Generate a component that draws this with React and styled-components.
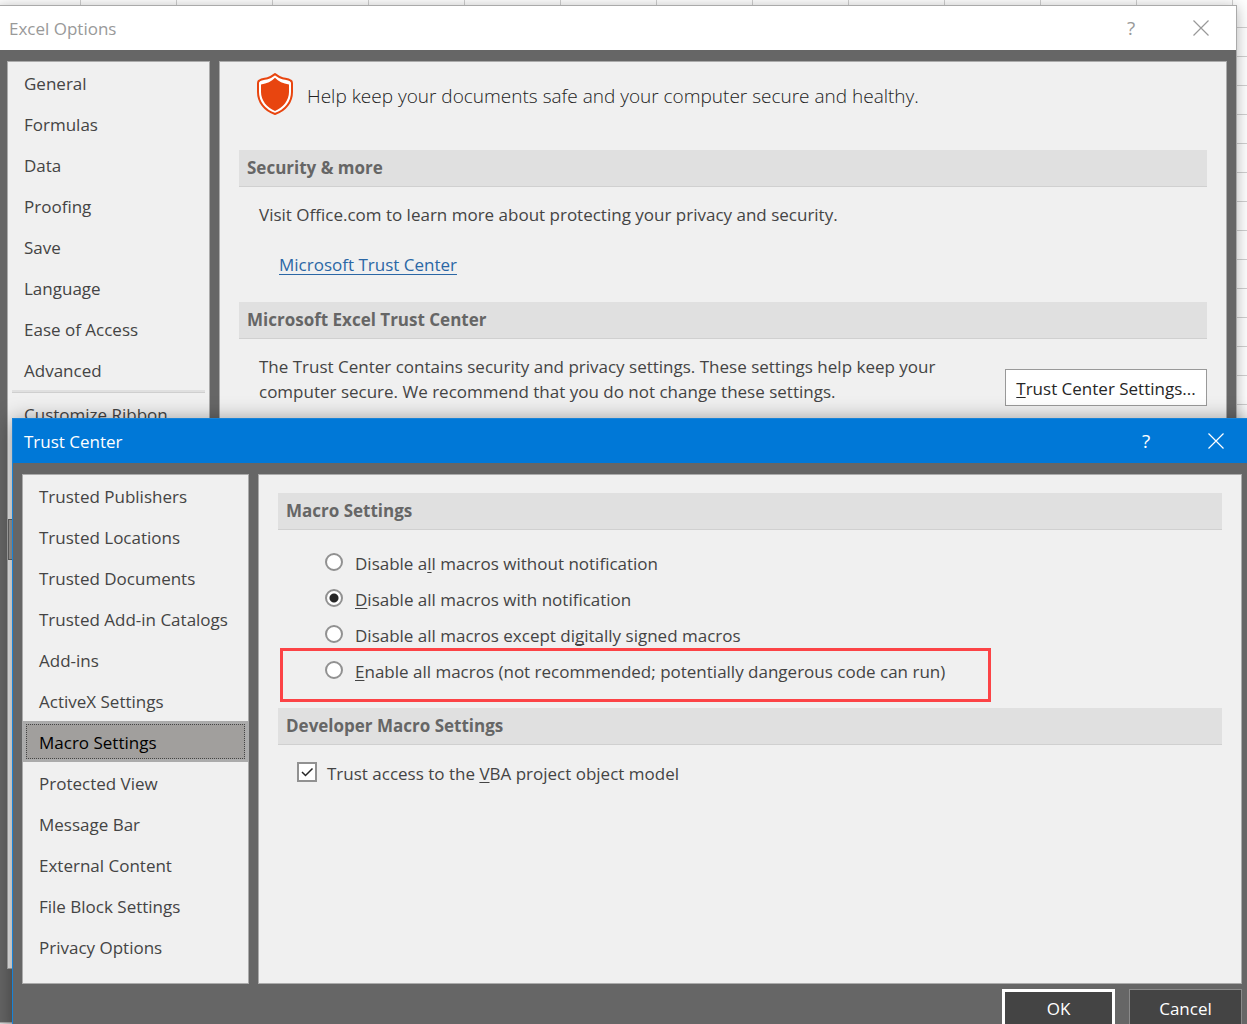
import React, { useState } from 'react';
import styled, { createGlobalStyle } from 'styled-components';

const GlobalStyle = createGlobalStyle`
  *, *::before, *::after { box-sizing: border-box; }
  body {
    margin: 0;
    font-family: "Open Sans", "Noto Sans", sans-serif;
    font-size: 17px;
    line-height: 25px;
    color: #444;
  }
  button, input { font: inherit; margin: 0; }
`;

const Desktop = styled.div`
  position: relative;
  height: 100vh;
  overflow: hidden;
  background-color: #fff;
  background-image:
    repeating-linear-gradient(to bottom, transparent 0 28px, #d0d0d0 28px 29px),
    repeating-linear-gradient(to right, transparent 0 95px, #d0d0d0 95px 96px);
  background-position: 0 -1px, -15px 0;
  background-size: 100% 2900px, 2880px 100%;
`;

const Dialog = styled.section`
  position: absolute;
  display: flex;
  flex-direction: column;
  background: #666;
  border: 1px solid ${(p) => (p.$active ? '#1883d7' : '#aaa')};
`;

const OptionsDialog = styled(Dialog)`
  inset: 5px 10px 1px -3px;
  box-shadow: 0 2px 14px rgba(0, 0, 0, 0.3);
`;

const TrustDialog = styled(Dialog)`
  inset: 418px -5px -14px 12px;
  box-shadow: 0 2px 20px rgba(0, 0, 0, 0.4);
`;

const TitleBar = styled.header`
  display: flex;
  flex: none;
  align-items: center;
  height: 44px;
  padding-left: 11px;
  background: ${(p) => (p.$active ? '#0078d7' : '#fff')};
  color: ${(p) => (p.$active ? '#fff' : '#999')};
`;

const Title = styled.h1`
  flex: 1;
  margin: 0;
  font-size: 17px;
  font-weight: 400;
`;

const CaptionButton = styled.button`
  display: flex;
  align-items: center;
  justify-content: center;
  width: 70px;
  height: 44px;
  padding: 0;
  border: 0;
  background: none;
  color: inherit;
  font-size: 19px;
`;

const Panes = styled.div`
  display: flex;
  flex: 1;
  gap: 9px;
  min-height: 0;
  padding: 11px 9px 0;
`;

const Sidebar = styled.nav`
  flex: none;
  width: ${(p) => p.$width};
  border: 1px solid #ababab;
  background: #f0f0f0;
`;

const NavItem = styled.button`
  display: block;
  width: 100%;
  height: 41px;
  padding: 2px 16px 0;
  border: 0;
  background: ${(p) => (p.$selected ? '#a19f9d' : 'none')};
  box-shadow: ${(p) => (p.$selected ? 'inset 0 0 0 3px #ababab' : 'none')};
  outline: ${(p) => (p.$selected ? '1px dotted #444' : 'none')};
  outline-offset: -4px;
  color: ${(p) => (p.$selected ? '#000' : '#444')};
  text-align: left;
  white-space: nowrap;
`;

const CoveredItem = styled(NavItem)`
  background: #a19f9d;
  box-shadow: none;
  outline: 1px solid #666;
  outline-offset: -1px;
`;

const NavRule = styled.hr`
  height: 3px;
  margin: 0 4px;
  border: 0;
  border-bottom: 1px solid #cfcfcf;
  background: #e0e0e0;
`;

const Pane = styled.main`
  flex: 1;
  min-width: 0;
  padding: 0 19px;
  border: 1px solid #ababab;
  background: #f0f0f0;
`;

const TrustPane = styled(Pane)`
  padding-top: 18px;
`;

const Intro = styled.div`
  display: flex;
  align-items: center;
  gap: 14px;
  height: 88px;
  padding: 0 0 24px 18px;
  color: #222;
  font-size: 19px;
  font-weight: 300;
`;

const SectionTitle = styled.h2`
  height: 37px;
  margin: 0;
  padding: 5px 8px;
  border-bottom: 1px solid #d0d0d0;
  background: #e0e0e0;
  color: #666;
  font-size: 17px;
  font-weight: 700;
`;

const SectionBody = styled.div`
  display: flex;
  flex-direction: column;
  align-items: flex-start;
  gap: 25px;
  padding: 15px 0 25px 20px;
`;

const SettingsRow = styled.div`
  display: flex;
  align-items: flex-start;
  justify-content: space-between;
  padding: 15px 0 0 20px;
`;

const Text = styled.p`
  margin: 0;
`;

const IntroText = styled(Text)`
  padding-top: 4px;
`;

const WrappedText = styled(Text)`
  flex: 1;
  max-width: 700px;
`;

const TrustLink = styled.a`
  margin-left: 20px;
  color: #2b67a5;
  text-decoration: underline;
  text-decoration-thickness: 1px;
  text-underline-offset: 3px;
`;

const SettingsButton = styled.button`
  flex: none;
  width: 202px;
  height: 37px;
  margin-top: 15px;
  padding: 2px 0 0;
  border: 1px solid #999;
  background: #fff;
  color: #262626;
  white-space: nowrap;
`;

const Key = styled.span`
  text-decoration: underline;
  text-decoration-thickness: 1px;
  text-underline-offset: 2px;
  text-decoration-skip-ink: none;
`;

const OptionGroup = styled.div`
  position: relative;
  padding: 14px 0 20px 47px;
`;

const OptionLabel = styled.label`
  display: flex;
  align-items: center;
  gap: 12px;
  height: 36px;
`;

const LabelText = styled.span`
  padding-top: 2px;
`;

const Radio = styled.input`
  flex: none;
  appearance: none;
  width: 18px;
  height: 18px;
  border: 2px solid #919191;
  border-radius: 50%;
  background: #fff;
  &:checked {
    background: radial-gradient(circle, #262626 0 4px, #fff 5px);
  }
`;

const Highlight = styled.div`
  position: absolute;
  left: 2px;
  top: 118px;
  width: 711px;
  height: 54px;
  border: 3px solid #fc4346;
  pointer-events: none;
`;

const CheckRow = styled.label`
  display: flex;
  align-items: center;
  gap: 10px;
  height: 36px;
  margin-top: 9px;
  padding-left: 19px;
`;

const CheckBox = styled.span`
  display: grid;
  flex: none;
  > * { grid-area: 1 / 1; }
  svg { pointer-events: none; }
`;

const Check = styled.input`
  appearance: none;
  width: 20px;
  height: 20px;
  border: 2px solid #919191;
  background: #fff;
  &:not(:checked) + svg { visibility: hidden; }
`;

const Footer = styled.footer`
  display: flex;
  flex: none;
  justify-content: flex-end;
  gap: 14px;
  height: 53px;
  padding: 5px 9px;
`;

const FooterButton = styled.button`
  width: 113px;
  height: 38px;
  padding: 0;
  border: ${(p) => (p.$primary ? '3px solid #fff' : '1px solid #8a8a8a')};
  background: #444;
  color: #fff;
`;

const CloseIcon = () => (
  <svg width="16" height="16" viewBox="0 0 16 16" fill="none" stroke="currentColor" strokeWidth="1.200" aria-hidden="true">
    <path d="M.5.5l15 15M15.5.5l-15 15" />
  </svg>
);

const ShieldIcon = () => (
  <svg width="36" height="42" viewBox="0 0 36 42" aria-hidden="true">
    <path
      d="M18 1c2 1.500 4 3.300 7.500 4.200 3 .800 6 .900 8 2.300 1 .500 1.500 1 1.500 2.500v9c0 10-6.500 18.500-17 22C7.500 37.500 1 29 1 19v-9c0-1.500.500-2 1.500-2.500 2-1.400 5-1.500 8-2.300C14 4.300 16 2.500 18 1z"
      fill="#fff"
      stroke="#e8450f"
      strokeWidth="2"
      strokeLinejoin="round"
    />
    <path
      d="M18 4.800c3.500 3.700 8 5.800 14 6.700V19c0 8.500-6 15.500-14 19C10 34.500 4 27.500 4 19v-7.500c6-.900 10.500-3 14-6.700z"
      fill="#e8450f"
    />
  </svg>
);

const WindowTitle = ({ title, active }) => (
  <TitleBar $active={active}>
    <Title>{title}</Title>
    <CaptionButton type="button" aria-label="Help">?</CaptionButton>
    <CaptionButton type="button" aria-label="Close"><CloseIcon /></CaptionButton>
  </TitleBar>
);

const optionGroups = [
  ['General', 'Formulas', 'Data', 'Proofing', 'Save', 'Language', 'Ease of Access', 'Advanced'],
  ['Customize Ribbon', ''],
  [''],
];

const trustItems = [
  'Trusted Publishers', 'Trusted Locations', 'Trusted Documents', 'Trusted Add-in Catalogs',
  'Add-ins', 'ActiveX Settings', 'Macro Settings', 'Protected View', 'Message Bar',
  'External Content', 'File Block Settings', 'Privacy Options',
];

const macroOptions = [
  ['Disable a', 'l', 'l macros without notification'],
  ['', 'D', 'isable all macros with notification'],
  ['Disable all macros except di', 'g', 'itally signed macros'],
  ['', 'E', 'nable all macros (not recommended; potentially dangerous code can run)'],
];

export default function App() {
  const [page, setPage] = useState('Macro Settings');
  const [macro, setMacro] = useState(1);
  const [vba, setVba] = useState(true);

  return (
    <>
      <GlobalStyle />
      <Desktop>
        <OptionsDialog aria-label="Excel Options">
          <WindowTitle title="Excel Options" />
          <Panes>
            <Sidebar $width="203px">
              {optionGroups.map((group, g) => (
                <React.Fragment key={g}>
                  {g > 0 && <NavRule />}
                  {group.map((name, i) => (
                    <NavItem type="button" key={i}>{name}</NavItem>
                  ))}
                </React.Fragment>
              ))}
              <CoveredItem type="button" />
            </Sidebar>
            <Pane>
              <Intro>
                <ShieldIcon />
                <IntroText>Help keep your documents safe and your computer secure and healthy.</IntroText>
              </Intro>
              <SectionTitle>Security &amp; more</SectionTitle>
              <SectionBody>
                <Text>Visit Office.com to learn more about protecting your privacy and security.</Text>
                <TrustLink href="#trust-center">Microsoft Trust Center</TrustLink>
              </SectionBody>
              <SectionTitle>Microsoft Excel Trust Center</SectionTitle>
              <SettingsRow>
                <WrappedText>
                  The Trust Center contains security and privacy settings. These settings help keep your
                  computer secure. We recommend that you do not change these settings.
                </WrappedText>
                <SettingsButton type="button"><Key>T</Key>rust Center Settings...</SettingsButton>
              </SettingsRow>
            </Pane>
          </Panes>
          <Footer />
        </OptionsDialog>

        <TrustDialog $active aria-label="Trust Center">
          <WindowTitle title="Trust Center" active />
          <Panes>
            <Sidebar $width="227px">
              {trustItems.map((name) => (
                <NavItem type="button" key={name} $selected={name === page} onClick={() => setPage(name)}>
                  {name}
                </NavItem>
              ))}
            </Sidebar>
            <TrustPane>
              <SectionTitle>Macro Settings</SectionTitle>
              <OptionGroup>
                {macroOptions.map(([before, key, after], i) => (
                  <OptionLabel key={i}>
                    <Radio type="radio" name="macros" checked={macro === i} onChange={() => setMacro(i)} />
                    <LabelText>{before}<Key>{key}</Key>{after}</LabelText>
                  </OptionLabel>
                ))}
                <Highlight />
              </OptionGroup>
              <SectionTitle>Developer Macro Settings</SectionTitle>
              <CheckRow>
                <CheckBox>
                  <Check type="checkbox" checked={vba} onChange={() => setVba(!vba)} />
                  <svg width="20" height="20" viewBox="0 0 20 20" fill="none" stroke="#262626" strokeWidth="1.500">
                    <path d="M5 10l3.500 3.500L15.500 6.500" />
                  </svg>
                </CheckBox>
                <LabelText>Trust access to the <Key>V</Key>BA project object model</LabelText>
              </CheckRow>
            </TrustPane>
          </Panes>
          <Footer>
            <FooterButton type="button" $primary>OK</FooterButton>
            <FooterButton type="button">Cancel</FooterButton>
          </Footer>
        </TrustDialog>
      </Desktop>
    </>
  );
}
